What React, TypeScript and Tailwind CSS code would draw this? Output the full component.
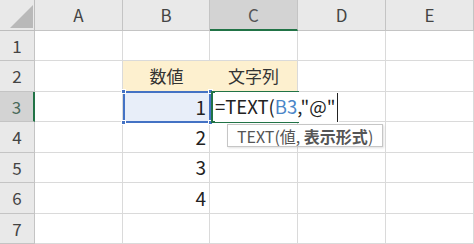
const cols = ['A', 'B', 'C', 'D', 'E']
const rows = [1, 2, 3, 4, 5, 6, 7]

const font = { fontFamily: '"Noto Sans CJK JP", "Noto Sans", sans-serif' }

function Cell({ r, c }: { r: number; c: string }) {
  const filled = r === 2 && (c === 'B' || c === 'C')
  let content: React.ReactNode = null
  if (r === 2 && c === 'B') content = <span className="w-full text-center text-[17px] text-[#333]">数値</span>
  if (r === 2 && c === 'C') content = <span className="w-full text-center text-[17px] text-[#333]">文字列</span>
  if (c === 'B' && r >= 3 && r <= 6)
    content = <span className="w-full pr-[3px] text-right text-[19px] text-[#222]">{r - 2}</span>

  return (
    <div
      className={`flex items-center border-b border-[#dadada] ${
        filled ? 'bg-[#fdf0cf]' : 'bg-white'
      } ${r === 2 && c === 'B' ? 'border-r-0' : 'border-r'}`}
    >
      {content}
    </div>
  )
}

export default function App() {
  return (
    <div className="relative h-[244px] w-[474px] overflow-hidden bg-white" style={font}>
      <div className="grid grid-cols-[35px_88px_87px_88px_88px_88px] grid-rows-[31px_30px_31px_30px_31px_30px_31px_30px]">
        {/* corner */}
        <div className="relative border-b border-r border-[#bdbdbd] bg-[#e9e9e9]">
          <svg className="absolute left-[10px] top-[5px]" width="24" height="23" viewBox="0 0 24 23">
            <polygon points="23,0 23,23 0,23" fill="#b9b9b9" />
          </svg>
        </div>
        {cols.map((c) => (
          <div
            key={c}
            className={`flex items-center justify-center border-r text-[17px] ${
              c === 'C'
                ? 'border-b-2 border-r-[#c4c4c4] border-b-[#217346] bg-[#d3d3d3] text-[#555]'
                : 'border-b border-[#c4c4c4] bg-[#e9e9e9] text-[#444]'
            }`}
          >
            {c}
          </div>
        ))}

        {rows.map((r) => (
          <div key={r} className="contents">
            <div
              className={`flex items-center justify-center text-[17px] ${
                r === 3
                  ? 'border-b border-r-2 border-b-[#c4c4c4] border-r-[#217346] bg-[#d3d3d3] text-[#4a6a5a]'
                  : 'border-b border-r border-[#c4c4c4] bg-[#e9e9e9] text-[#444]'
              }`}
            >
              {r}
            </div>
            {cols.map((c) => (
              <Cell key={c} r={r} c={c} />
            ))}
          </div>
        ))}
      </div>

      {/* B3 selection */}
      <div className="absolute left-[123px] top-[91px] h-[32px] w-[88px] border-2 border-[#4472c4] bg-[#e8eef9]">
        <span className="absolute right-[3px] top-[1px] text-[19px] leading-[26px] text-[#222]">1</span>
      </div>
      {[
        'left-[121px] top-[89px]',
        'left-[208px] top-[89px]',
        'left-[121px] top-[120px]',
        'left-[208px] top-[120px]',
      ].map((p) => (
        <div key={p} className={`absolute h-[5px] w-[5px] border border-white bg-[#4472c4] ${p}`} />
      ))}

      {/* C3 editing */}
      <div className="absolute left-[211px] top-[91px] h-[32px] w-[88px] border-y-2 border-l-2 border-[#217346]" />
      <div className="absolute left-[215px] top-[92px] flex h-[30px] items-center whitespace-nowrap bg-white pr-[1px] text-[18.5px] text-[#222]">
        <span>=TEXT(</span>
        <span className="text-[#4a86c8]">B3</span>
        <span>,"@"</span>
        <span className="ml-[2px] h-[29px] w-[1px] bg-[#222]" />
      </div>

      {/* tooltip */}
      <div className="absolute left-[227px] top-[124px] flex h-[23px] w-[156px] items-center whitespace-nowrap border border-[#c6c6c6] bg-white pl-[9px] text-[16px] text-[#555] shadow-[1px_1px_2px_rgba(0,0,0,0.12)]">
        <span>{'TEXT(値,\u00a0'}</span>
        <span className="font-bold">表示形式</span>
        <span>)</span>
      </div>
    </div>
  )
}
